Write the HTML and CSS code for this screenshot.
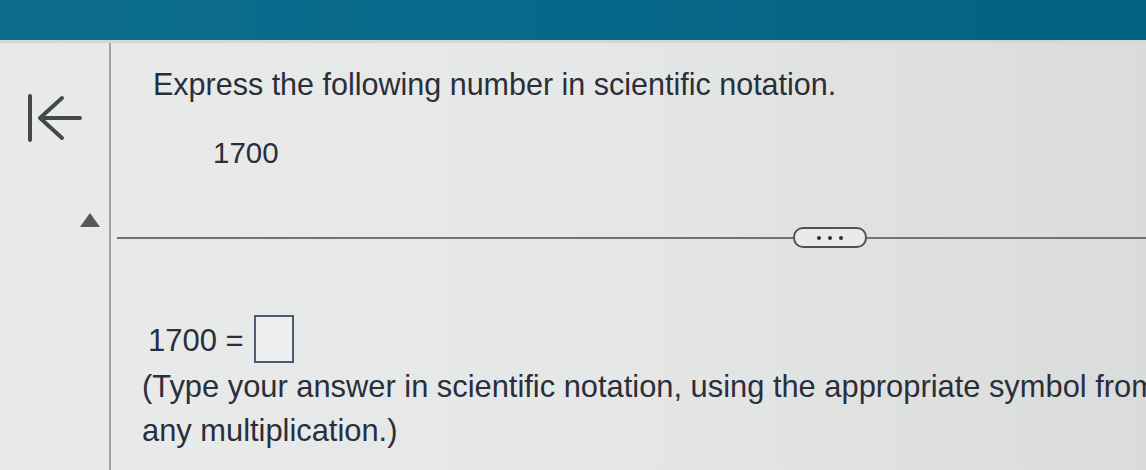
FILE: index.html
```html
<!DOCTYPE html>
<html>
<head>
<meta charset="utf-8">
<link rel="stylesheet" href="styles.css">
</head>
<body>
<header class="topbar"></header>
<div class="main">
  <aside class="side">
    <button class="back" aria-label="Back">
      <svg width="56" height="52" viewBox="0 0 56 52">
        <path d="M4 4 V48" stroke="#44474c" stroke-width="4" stroke-linecap="round" fill="none"/>
        <path d="M54 26 H14 M36 6 L14 26 L36 46" stroke="#44474c" stroke-width="4" stroke-linecap="round" stroke-linejoin="round" fill="none"/>
      </svg>
    </button>
    <div class="tri"></div>
  </aside>
  <section class="content">
    <h1 class="q">Express the following number in scientific notation.</h1>
    <div class="num">1700</div>
    <div class="divider">
      <span class="line first"></span>
      <button class="more"><span></span><span></span><span></span></button>
      <span class="line"></span>
    </div>
    <div class="answer">
      <span class="eq">1700 =</span>
      <span class="box"></span>
    </div>
    <p class="hint">(Type your answer in scientific notation, using the appropriate symbol from the palette for any multiplication.)</p>
  </section>
</div>
</body>
</html>
```
FILE: styles.css
```css
html, body { margin: 0; padding: 0; }
body {
  width: 1146px; height: 470px; overflow: hidden;
  font-family: "Liberation Sans", Arial, sans-serif;
  color: #2b2e3b;
  background: linear-gradient(90deg, #e9ebea 0%, #e6e8e7 50%, #dadcdb 100%);
}
.topbar {
  height: 40px;
  background: linear-gradient(90deg, #0c6d8c 0%, #07698a 50%, #04607f 100%);
  border-bottom: 3px solid #d4d7d7;
}
.main { display: flex; height: 427px; }
.side {
  width: 109px; flex: none;
  border-right: 2px solid #a3a5a6;
  position: relative;
}
.back {
  position: absolute; left: 26px; top: 49px;
  background: none; border: 0; padding: 0;
}
.tri {
  position: absolute; left: 80px; top: 170px;
  width: 0; height: 0;
  border-left: 10px solid transparent; border-right: 10px solid transparent;
  border-bottom: 14px solid #55585c;
}
.content { flex: 1; overflow: hidden; }
.q {
  margin: 23px 0 0 42px;
  font-size: 30.5px; line-height: 36px; font-weight: normal; white-space: nowrap;
}
.num { margin: 34px 0 0 102px; font-size: 29.5px; line-height: 34px; }
.divider { display: flex; align-items: center; margin: 57px 0 0 6px; }
.line { height: 2px; background: #707375; flex: 1; }
.line.first { flex: none; width: 676px; }
.more {
  width: 74px; height: 21px; box-sizing: border-box;
  border: 2px solid #505356; border-radius: 10px;
  background: #e9ebea; display: flex; align-items: center; justify-content: center; gap: 7px; padding: 0;
}
.more span { width: 4px; height: 4px; background: #2f3236; border-radius: 50%; }
.answer { display: flex; align-items: flex-start; margin: 67px 0 0 37px; }
.eq { font-size: 31px; line-height: 48px; padding-top: 2px; }
.box {
  width: 40px; height: 48px; box-sizing: border-box;
  border: 2px solid #4d5a72; margin-left: 10px; background: #eef0ef;
}
.hint { margin: 0 0 0 31px; font-size: 30.85px; line-height: 44px; width: 1265px; }
```
